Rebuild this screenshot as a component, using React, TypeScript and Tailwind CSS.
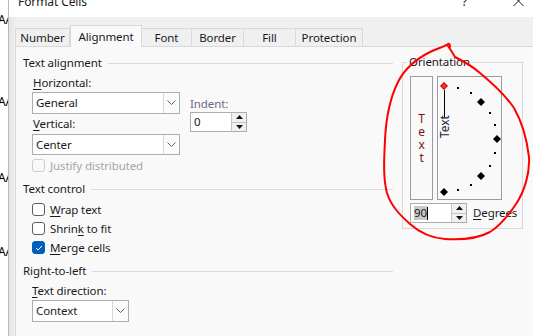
import React from "react";

const font = { fontFamily: '"Noto Sans", "Open Sans", sans-serif' };

const Chevron = () => (
  <svg width="9" height="6" viewBox="0 0 9 6" className="block">
    <path d="M0.5 0.5 L4.5 4.5 L8.5 0.5" fill="none" stroke="#606060" strokeWidth="1" />
  </svg>
);

const Select = ({ value, w, h }: { value: string; w: string; h: string }) => (
  <div className={`flex ${w} ${h} bg-white border border-[#adadad]`}>
    <div className="flex-1 flex items-center pl-[3px] text-[11.5px] text-[#1a1a1a]">{value}</div>
    <div className="w-[16px] flex items-center justify-center border-l border-[#d6d6d6] bg-[#fbfbfb]">
      <Chevron />
    </div>
  </div>
);

const Spin = ({ value, selected }: { value: string; selected?: boolean }) => (
  <div className="flex w-[57px] h-[20px] bg-white border border-[#adadad]">
    <div className="flex-1 flex items-center pl-[3px] text-[11.5px] text-[#1a1a1a]">
      {selected ? (
        <span className="flex items-center">
          <span className="bg-[#c8c8c8] leading-[14px]">{value}</span>
          <span className="w-px h-[13px] bg-black" />
        </span>
      ) : (
        value
      )}
    </div>
    <div className="w-[15px] flex flex-col border-l border-[#c4c4c4] bg-[#f0f0f0]">
      <div className="flex-1 flex items-center justify-center border-b border-[#c4c4c4]">
        <svg width="7" height="4" viewBox="0 0 7 4"><path d="M3.5 0 L7 4 L0 4 Z" fill="#111" /></svg>
      </div>
      <div className="flex-1 flex items-center justify-center">
        <svg width="7" height="4" viewBox="0 0 7 4"><path d="M0 0 L7 0 L3.5 4 Z" fill="#111" /></svg>
      </div>
    </div>
  </div>
);

const Check = ({ label, checked, disabled }: { label: React.ReactNode; checked?: boolean; disabled?: boolean }) => (
  <div className="flex items-center h-[19px]">
    <div
      className={`w-[13px] h-[13px] rounded-[3px] flex items-center justify-center ${
        checked
          ? "bg-[#005fb8] border border-[#005fb8]"
          : disabled
          ? "bg-[#f9f9f9] border border-[#cdcdcd]"
          : "bg-white border border-[#5c5c5c]"
      }`}
    >
      {checked && (
        <svg width="8" height="6" viewBox="0 0 8 6">
          <path d="M1 3 L3 5 L7 1" fill="none" stroke="white" strokeWidth="1" />
        </svg>
      )}
    </div>
    <span className={`ml-[5px] text-[11.5px] leading-[16px] ${disabled ? "text-[#a6a6a6]" : "text-[#1a1a1a]"}`}>{label}</span>
  </div>
);

const GroupTitle = ({ title }: { title: string }) => (
  <div className="flex items-center h-[16px]">
    <span className="text-[11.5px] leading-[16px] text-[#1a1a1a]">{title}</span>
    <div className="flex-1 ml-[6px] h-px bg-[#dcdcdc]" />
  </div>
);

const U = ({ children }: { children: React.ReactNode }) => <span className="underline underline-offset-2">{children}</span>;

const tabs = [
  { name: "Number", w: "w-[55px]" },
  { name: "Alignment", w: "w-[72px]" },
  { name: "Font", w: "w-[51px]" },
  { name: "Border", w: "w-[53px]" },
  { name: "Fill", w: "w-[53px]" },
  { name: "Protection", w: "w-[68px]" },
];

const Dial = () => {
  const cx = 6;
  const cy = 62;
  const r = 53;
  const dots = [75, 60, 30, 15, -15, -30, -60, -75];
  const diamonds = [45, 0, -45, -90];
  const pt = (a: number) => [cx + r * Math.cos((a * Math.PI) / 180), cy - r * Math.sin((a * Math.PI) / 180)];
  const dia = (x: number, y: number, fill: string, k: number) => (
    <path key={k} d={`M${x} ${y - 4} L${x + 4} ${y} L${x} ${y + 4} L${x - 4} ${y} Z`} fill={fill} />
  );
  return (
    <svg width="63" height="122" viewBox="0 0 63 122" className="block">
      {dia(cx, cy - r, "#e00000", 99)}
      <path d={`M${cx - 1.5} ${cy - r - 1.5} h3 v3 h-3 Z`} fill="#ff4040" />
      {dots.map((a, i) => {
        const [x, y] = pt(a);
        return <rect key={i} x={Math.round(x) - 1} y={Math.round(y) - 1} width="2" height="2" fill="#000" />;
      })}
      {diamonds.map((a, i) => {
        const [x, y] = pt(a);
        return dia(Math.round(x), Math.round(y), "#000", i);
      })}
      <line x1={cx + 0.5} y1={13} x2={cx + 0.5} y2={40} stroke="#000" strokeWidth="1" />
      <text
        x={0}
        y={0}
        transform={`translate(${cx + 5} ${61}) rotate(-90)`}
        fontSize="12"
        fill="#1c1c3c"
        style={font}
      >
        Text
      </text>
    </svg>
  );
};

export default function App() {
  return (
    <div className="relative w-[533px] h-[336px] overflow-hidden bg-white flex tracking-[-0.1px]" style={font}>
      {/* sheet behind the dialog */}
      <div className="w-[9px] shrink-0 bg-white relative overflow-hidden border-r border-[#b8b8b8]">
        <div className="flex flex-col text-[12px] text-black -ml-[2px]">
          <span className="mt-[12px] leading-[16px]">AA</span>
          <span className="mt-[66px] leading-[16px]">AA</span>
          <span className="mt-[60px] leading-[16px]">AA</span>
          <span className="mt-[58px] leading-[16px]">AA</span>
        </div>
      </div>

      <div className="flex-1 flex flex-col min-w-0">
        {/* title bar */}
        <div className="h-[17px] shrink-0 bg-white flex items-start relative">
          <span className="ml-[9px] -mt-[6px] text-[12px] leading-[16px] text-[#1a1a1a]">Format Cells</span>
          <span className="ml-auto -mt-[6px] text-[12px] leading-[16px] text-[#1a1a1a] mr-[46px]">?</span>
          <svg width="11" height="7" viewBox="0 0 11 7" className="mr-[9px]">
            <path d="M0.5 -4 L5.5 1 L10.5 -4 M0.5 6 L5.5 1 L10.5 6" fill="none" stroke="#1a1a1a" strokeWidth="1" />
          </svg>
        </div>

        {/* dialog body */}
        <div className="flex-1 bg-[#f0f0f0] pl-[6px] flex flex-col bg-gradient-to-r from-[#e4e4e4] to-[#f0f0f0] [background-size:7px_100%] [background-repeat:no-repeat]">
          <div className="h-[29px] shrink-0 flex items-end pl-[1px] -ml-[1px]">
            {tabs.map((t) =>
              t.name === "Alignment" ? (
                <div
                  key={t.name}
                  className={`${t.w} h-[22px] -mb-px relative z-10 bg-[#f9f9f9] border border-b-0 border-[#d9d9d9] flex items-center justify-center text-[11.5px] text-[#1a1a1a]`}
                >
                  {t.name}
                </div>
              ) : (
                <div
                  key={t.name}
                  className={`${t.w} h-[18px] -ml-px first:ml-0 bg-[#f0f0f0] border border-b-0 border-[#d9d9d9] flex items-center justify-center text-[11.5px] text-[#1a1a1a]`}
                >
                  {t.name}
                </div>
              )
            )}
          </div>

          {/* tab page */}
          <div className="flex-1 bg-[#f9f9f9] border-l border-t border-[#d9d9d9] flex pl-[7px] pt-[8px]">
            <div className="w-[370px] flex flex-col">
              <GroupTitle title="Text alignment" />
              <div className="flex pl-[9px] mt-[4px]">
                <div className="flex flex-col w-[148px]">
                  <div className="h-[16px] flex items-center text-[11.5px] text-[#1a1a1a] pl-px">
                    <span><U>H</U>orizontal:</span>
                  </div>
                  <div className="mt-px">
                    <Select value="General" w="w-[148px]" h="h-[22px]" />
                  </div>
                  <div className="h-[20px] flex items-center text-[11.5px] text-[#1a1a1a] pl-px">
                    <span><U>V</U>ertical:</span>
                  </div>
                  <div>
                    <Select value="Center" w="w-[148px]" h="h-[21px]" />
                  </div>
                  <div className="mt-px">
                    <Check label="Justify distributed" disabled />
                  </div>
                </div>
                <div className="flex flex-col ml-[10px] pt-[21px]">
                  <div className="h-[16px] flex items-center text-[11.5px] text-[#6f6a80]">Indent:</div>
                  <Spin value="0" />
                </div>
              </div>

              <div className="mt-[6px]">
                <GroupTitle title="Text control" />
              </div>
              <div className="flex flex-col pl-[9px] mt-[3px]">
                <Check label={<><U>W</U>rap text</>} />
                <Check label={<>Shrin<U>k</U> to fit</>} />
                <Check label={<><U>M</U>erge cells</>} checked />
              </div>

              <div className="mt-[6px]">
                <GroupTitle title="Right-to-left" />
              </div>
              <div className="flex flex-col pl-[9px] mt-[3px]">
                <div className="h-[18px] flex items-center text-[11.5px] text-[#1a1a1a]">
                  <span><U>T</U>ext direction:</span>
                </div>
                <Select value="Context" w="w-[97px]" h="h-[22px]" />
              </div>
            </div>

            {/* orientation group */}
            <div className="ml-[9px] mt-[7px] w-[121px] h-[167px] border border-[#d9d9d9] relative flex flex-col pl-[7px] pt-[13px]">
              <span className="absolute -top-[9px] left-[4px] px-[2px] bg-[#f9f9f9] text-[11.5px] leading-[16px] text-[#1a1a1a]">
                Orientation
              </span>
              <div className="flex gap-[4px]">
                <div className="w-[23px] h-[124px] border border-[#9a9aa6] flex flex-col items-center justify-center text-[12px] leading-[13px] text-[#7a1414]">
                  <span>T</span>
                  <span>e</span>
                  <span>x</span>
                  <span>t</span>
                </div>
                <div className="w-[65px] h-[124px] border border-[#9a9aa6]">
                  <Dial />
                </div>
              </div>
              <div className="flex items-center mt-[3px]">
                <Spin value="90" selected />
                <span className="ml-[6px] text-[11.5px] text-[#1a1a1a]">
                  <U>D</U>egrees
                </span>
              </div>
            </div>
          </div>
        </div>
      </div>

      {/* red annotation drawn over the dialog */}
      <svg width="533" height="336" className="absolute inset-0 pointer-events-none">
        <path
          d="M448 46 C451 50 453 54 455 57 C463 61 472 66 480 73 C492 83 506 96 514 108 C522 122 527 140 529 157 C530 174 524 192 516 204 C508 216 500 226 490 232 C477 239 460 240 445 239 C432 238 420 233 410 224 C400 215 391 206 387 193 C383 178 384 160 385 140 C386 118 390 98 398 82 C405 68 418 58 430 52 C438 48 444 47 448 44 C449 43 450 44 450 47"
          fill="none"
          stroke="#ff0000"
          strokeWidth="2"
          strokeLinecap="round"
        />
      </svg>
    </div>
  );
}
